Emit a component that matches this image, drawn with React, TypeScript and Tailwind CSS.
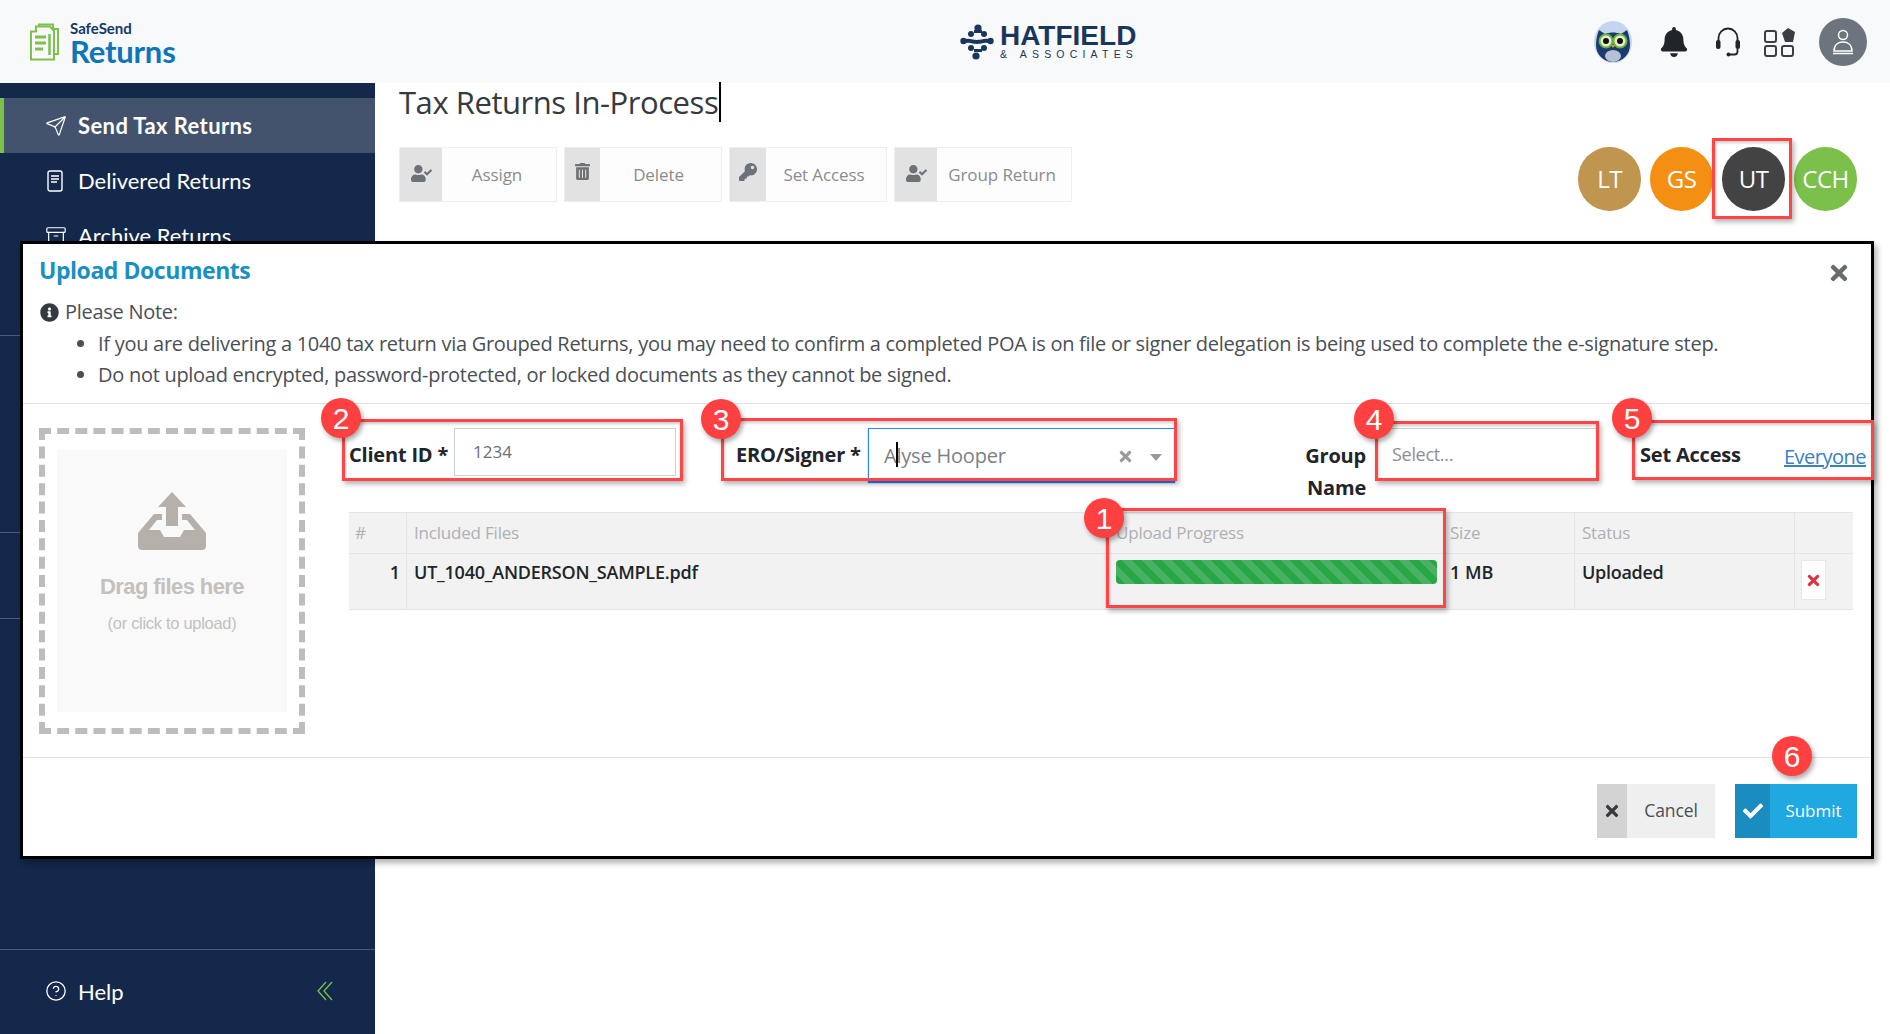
import React from "react";
import { FaBell, FaCheck, FaInfoCircle, FaKey, FaTimes, FaTrashAlt, FaUserCheck } from "react-icons/fa";
import { Send, Archive, CircleHelp } from "lucide-react";

function ToolBtn({ icon, label, w, iw }: { icon: React.ReactNode; label: string; w: string; iw: string }) {
  return (
    <div className={`flex h-[55px] border border-[#eeeeee] bg-[#fdfdfd] ${w}`}>
      <div className={`flex items-start justify-center bg-[#e2e2e2] pt-[15px] text-[#6d7278] ${iw}`}>{icon}</div>
      <div className="flex flex-1 items-center justify-center pr-[4px] text-[17px] tracking-[-0.1px] text-[#8c8c8c]">{label}</div>
    </div>
  );
}

function Circle({ label, color }: { label: string; color: string }) {
  return <div className={`flex h-[64px] w-[63px] items-center justify-center rounded-full text-[24px] tracking-[-0.5px] text-white ${color}`}>{label}</div>;
}

function Badge({ n, className }: { n: number; className: string }) {
  return (
    <div className={`absolute flex h-[40px] w-[40px] items-center justify-center rounded-full bg-[#ff4040] font-['Liberation_Sans',sans-serif] text-[30px] text-white shadow-[2px_3px_5px_rgba(0,0,0,0.35)] ${className}`}>
      {n}
    </div>
  );
}

function RedBox({ className }: { className: string }) {
  return <div className={`pointer-events-none absolute border-[3px] border-[#ff4545] shadow-[2px_3px_5px_rgba(0,0,0,0.3),inset_1px_2px_3px_rgba(0,0,0,0.2)] ${className}`} />;
}

function SafeSendMark() {
  return (
    <svg width="30" height="38" viewBox="0 0 30 38" fill="none" stroke="#7dc14b" strokeWidth="2">
      <path d="M9 3V1.5H23V6H28V31H24" />
      <path d="M1 8.5H6V3.5H20L24 8V36.5H1z" />
      <path d="M5 14H16M5 20H16M5 26H13" strokeWidth="3" />
      <path d="M19.5 11V32" strokeWidth="2.5" />
    </svg>
  );
}

function HatfieldMark() {
  return (
    <svg width="34" height="36" viewBox="0 0 34 36" fill="#1b365d">
      <circle cx="18" cy="4" r="3.6" />
      <circle cx="11" cy="10" r="3" />
      <circle cx="24" cy="10" r="3" />
      <circle cx="3.5" cy="17" r="3.2" />
      <circle cx="30.5" cy="17" r="3.2" />
      <circle cx="11" cy="24" r="3" />
      <circle cx="24" cy="24" r="3" />
      <circle cx="16" cy="32" r="3.6" />
      <path d="M6 15c4-1 7 1 11 1s7-2 11-1v4c-4-1-7 1-11 1s-7-2-11-1z" />
      <path d="M14 6h8v3h-8zM14 25h8v3h-8z" />
    </svg>
  );
}

function Owl() {
  return (
    <svg width="38" height="42" viewBox="0 0 38 42">
      <ellipse cx="19" cy="21" rx="19" ry="21" fill="#c6d5ef" />
      <path d="M5 9l6 4c5-2 11-2 16 0l6-4c2 5 3 10 3 15 0 10-8 17-17 17S2 34 2 24c0-5 1-10 3-15z" fill="#1a3a70" />
      <ellipse cx="19" cy="35" rx="8" ry="6" fill="#b6c1d5" />
      <circle cx="12" cy="20" r="6.5" fill="#e9edd0" stroke="#6bb13c" strokeWidth="2" />
      <circle cx="26" cy="20" r="6.5" fill="#e9edd0" stroke="#6bb13c" strokeWidth="2" />
      <circle cx="12" cy="20" r="3" fill="#111" />
      <circle cx="26" cy="20" r="3" fill="#111" />
      <path d="M17 24h4l-2 3z" fill="#e0a030" />
    </svg>
  );
}

function UploadIcon() {
  return (
    <svg width="68" height="58" viewBox="0 0 68 58" fill="#b5b0aa">
      <path d="M34 0L48 15H40V34H28V15H20z" />
      <path d="M16 22H24V28H19L11 38H22L26 45H42L46 38H57L49 28H44V22H52L68 41V54Q68 58 64 58H4Q0 58 0 54V41z" />
    </svg>
  );
}

function AppsIcon() {
  return (
    <svg width="32" height="30" viewBox="0 0 32 30" fill="none" stroke="#3a3f45" strokeWidth="2">
      <rect x="1" y="4" width="11" height="11" rx="2" />
      <rect x="1" y="19" width="11" height="10" rx="2" />
      <rect x="18" y="19" width="11" height="10" rx="2" />
      <path d="M24 1l7 4-2 10-8 0-3-9z" fill="#3a3f45" stroke="none" />
    </svg>
  );
}

function HeadsetIcon() {
  return (
    <svg width="26" height="30" viewBox="0 0 26 30" fill="none" stroke="#212529" strokeWidth="1.8">
      <path d="M3.5 14V11a9.5 9.5 0 0 1 19 0v3" />
      <rect x="1" y="13" width="4.5" height="9" rx="2" fill="#212529" stroke="none" />
      <rect x="20.5" y="13" width="4.5" height="9" rx="2" fill="#212529" stroke="none" />
      <path d="M22.5 22v2.5a3 3 0 0 1-3 3H15" />
      <circle cx="13.5" cy="27.5" r="2" fill="#212529" stroke="none" />
    </svg>
  );
}

function AvatarIcon() {
  return (
    <svg width="22" height="26" viewBox="0 0 22 26" fill="none" stroke="white" strokeWidth="1.5">
      <circle cx="11" cy="6" r="4.5" />
      <path d="M2 22c0-6 4-9 9-9s9 3 9 9z" />
      <path d="M1 24.5h20" />
    </svg>
  );
}

function SelectBox({ className, children }: { className: string; children: React.ReactNode }) {
  return <div className={`relative flex items-center ${className}`}>{children}</div>;
}

export default function App() {
  return (
    <div className="relative flex h-[1034px] w-[1890px] flex-col overflow-hidden bg-white font-['Open_Sans',sans-serif] text-[#4a4f55]">
      <header className="flex h-[83px] items-center bg-[#f8f9fa]">
        <div className="flex w-[375px] items-center gap-[10px] pl-[30px]">
          <SafeSendMark />
          <div className="flex flex-col font-['Lato',sans-serif]">
            <span className="text-[15px] font-bold leading-[18px] text-[#163a66]">SafeSend</span>
            <span className="text-[31px] font-bold leading-[28px] tracking-[-0.2px] text-[#0d75b8]">Returns</span>
          </div>
        </div>
        <div className="w-[585px]" />
        <div className="flex items-center gap-[6px]">
          <HatfieldMark />
          <div className="flex flex-col font-['Liberation_Sans',sans-serif] text-[#1b365d]">
            <span className="text-[28px] font-bold leading-[25px]">HATFIELD</span>
            <span className="text-[10.5px] leading-[12px] tracking-[5.2px]">&amp; ASSOCIATES</span>
          </div>
        </div>
        <div className="ml-auto flex items-center pr-[23px]">
          <Owl />
          <FaBell className="ml-[27px] text-[30px] text-[#212529]" />
          <span className="ml-[26px]"><HeadsetIcon /></span>
          <span className="ml-[23px]"><AppsIcon /></span>
          <div className="ml-[23px] flex h-[48px] w-[48px] items-center justify-center rounded-full bg-[#6c757d]">
            <AvatarIcon />
          </div>
        </div>
      </header>

      <div className="flex flex-1">
        <aside className="flex w-[375px] flex-col bg-[#14284b] pt-[15px] font-['Lato',sans-serif] text-[22px] text-white">
          <div className="flex h-[55px] items-center gap-[11px] border-l-[4px] border-[#7dc14b] bg-[#43536d] pl-[41px] font-bold tracking-[0.4px]">
            <Send className="h-[22px] w-[22px]" strokeWidth={1.3} />
            <span>Send Tax Returns</span>
          </div>
          <div className="flex h-[55px] items-center gap-[15px] pl-[47px]">
            <svg width="16" height="22" viewBox="0 0 16 22" fill="none" stroke="white" strokeWidth="1.4">
              <rect x="1" y="1" width="14" height="20" rx="2" />
              <path d="M4 6h8M4 9h8M4 12h6" />
            </svg>
            <span>Delivered Returns</span>
          </div>
          <div className="flex h-[55px] items-center gap-[11px] pl-[45px]">
            <Archive className="h-[22px] w-[22px]" strokeWidth={1.3} />
            <span>Archive Returns</span>
          </div>
          <div className="mt-[72px] h-px bg-[#4a5a78]" />
          <div className="mt-[196px] h-px bg-[#4a5a78]" />
          <div className="mt-[85px] h-px bg-[#4a5a78]" />
          <div className="mt-auto flex h-[85px] items-center border-t border-[#4a5a78] pb-[2px] pl-[45px] pr-[42px] font-normal">
            <CircleHelp className="h-[22px] w-[22px]" strokeWidth={1.4} />
            <span className="ml-[11px]">Help</span>
            <svg className="ml-auto" width="16" height="20" viewBox="0 0 16 20" fill="none" stroke="#7dc14b" strokeWidth="1.3">
              <path d="M9 1L1 10L9 19M15 1L7 10L15 19" />
            </svg>
          </div>
        </aside>

        <main className="flex flex-1 flex-col pl-[24px] pr-[33px]">
          <div className="flex h-[38px] items-center">
            <h1 className="border-r-2 border-black pr-px text-[31px] leading-[40px] tracking-[-0.45px] text-[#343a40]">Tax Returns In-Process</h1>
          </div>
          <div className="mt-[26px] flex items-start justify-between">
            <div className="flex gap-[7px]">
              <ToolBtn icon={<FaUserCheck className="text-[21px]" />} label="Assign" w="w-[158px]" iw="w-[42px]" />
              <ToolBtn icon={<FaTrashAlt className="text-[17px]" />} label="Delete" w="w-[158px]" iw="w-[35px]" />
              <ToolBtn icon={<FaKey className="text-[18px]" />} label="Set Access" w="w-[158px]" iw="w-[36px]" />
              <ToolBtn icon={<FaUserCheck className="text-[21px]" />} label="Group Return" w="w-[178px]" iw="w-[42px]" />
            </div>
            <div className="flex gap-[9px]">
              <Circle label="LT" color="bg-[#bf954f]" />
              <Circle label="GS" color="bg-[#f39014]" />
              <Circle label="UT" color="bg-[#434343]" />
              <Circle label="CCH" color="bg-[#7bc04a]" />
            </div>
          </div>
        </main>
      </div>

      <section className="absolute left-[20px] top-[241px] flex h-[618px] w-[1854px] flex-col border-[3px] border-black bg-white shadow-[3px_4px_6px_rgba(0,0,0,0.3)]">
        <div className="h-[160px] border-b border-[#e2e2e6] pl-[16px] pr-[20px]">
          <div className="flex items-center justify-between pt-[6px]">
            <h2 className="text-[23px] font-bold leading-[40px] tracking-[-0.45px] text-[#1a8fc2]">Upload Documents</h2>
            <FaTimes className="mt-[5px] text-[24px] text-[#666b70]" />
          </div>
          <div className="ml-[1px] mt-[6px] flex items-center gap-[6px] text-[20px] leading-[32px] tracking-[-0.28px]">
            <FaInfoCircle className="text-[19px] text-[#343a40]" />
            <span>Please Note:</span>
          </div>
          <ul className="list-disc pl-[59px] text-[20px] leading-[31px] tracking-[-0.28px]">
            <li>If you are delivering a 1040 tax return via Grouped Returns, you may need to confirm a completed POA is on file or signer delegation is being used to complete the e-signature step.</li>
            <li>Do not upload encrypted, password-protected, or locked documents as they cannot be signed.</li>
          </ul>
        </div>

        <div className="flex h-[354px] border-b border-[#e2e2e6] pl-[16px] pt-[24px]">
          <div className="flex h-[306px] w-[266px] shrink-0 border-[6px] border-dashed border-[#bdbdbd] px-[12px] py-[16px]">
            <div className="flex flex-1 flex-col items-center bg-[#f9f9f9] pt-[42px] font-['Liberation_Sans',sans-serif]">
              <UploadIcon />
              <div className="mt-[20px] text-[22px] font-bold tracking-[-0.6px] text-[#c4c0bc]">Drag files here</div>
              <div className="mt-[8px] text-[16.5px] tracking-[-0.3px] text-[#c4c0bc]">(or click to upload)</div>
            </div>
          </div>

          <div className="ml-[44px] flex w-[1504px] shrink-0 flex-col">
            <div className="flex h-[84px] items-start">
              <div className="flex w-[387px] shrink-0 items-start">
                <label className="w-[105px] pt-[13px] text-[20px] font-bold leading-[28px] tracking-[-0.2px] text-[#212529]">Client ID *</label>
                <div className="flex h-[48px] w-[222px] items-center border border-[#cdd0d6] pl-[18px] text-[17px] text-[#6a6f75]">1234</div>
              </div>
              <div className="flex shrink-0 items-start">
                <label className="w-[132px] pt-[13px] text-[20px] font-bold leading-[28px] tracking-[-0.2px] text-[#212529]">ERO/Signer *</label>
                <SelectBox className="h-[54px] w-[307px] border border-[#2684ff] pl-[15px] pt-[2px] text-[20px] tracking-[-0.2px] text-[#7a7f85] shadow-[0_1px_1px_#2684ff]">
                  <span>Alyse Hooper</span>
                  <div className="absolute left-[27px] top-[13px] h-[25px] w-[2px] bg-black" />
                  <FaTimes className="absolute right-[40px] text-[17px] text-[#9a9a9a]" />
                  <div className="absolute right-[12px] top-[25px] h-0 w-0 border-x-[6px] border-t-[7px] border-x-transparent border-t-[#9a9a9a]" />
                </SelectBox>
              </div>
              <label className="ml-[111px] w-[80px] shrink-0 pt-[12px] text-right text-[20px] font-bold leading-[32px] tracking-[-0.2px] text-[#212529]">Group Name</label>
              <div className="ml-[9px] flex h-[52px] w-[222px] shrink-0 items-center border border-[#cdd0d6] pl-[16px] text-[18px] tracking-[-0.3px] text-[#8a8f95]">Select...</div>
              <label className="ml-[43px] w-[144px] shrink-0 pt-[13px] text-[20px] font-bold leading-[28px] tracking-[-0.2px] text-[#212529]">Set Access</label>
              <a className="shrink-0 pt-[14px] text-[20px] leading-[30px] tracking-[-0.5px] text-[#3a80c4] underline">Everyone</a>
            </div>

            <div className="grid h-[98px] grid-cols-[58px_699px_341px_128px_220px_58px] grid-rows-[40px_57px] border-y border-[#e4e4e8] bg-[#f2f2f2] text-[18px]">
              <div className="flex items-center border-r border-[#e4e4e8] pb-[1px] pl-[6px] text-[17px] text-[#aeb0b3]">#</div>
              <div className="flex items-center border-r border-[#e4e4e8] pb-[1px] pl-[7px] text-[17px] tracking-[-0.2px] text-[#aeb0b3]">Included Files</div>
              <div className="flex items-center pb-[1px] pl-[10px] text-[17px] tracking-[-0.2px] text-[#aeb0b3]">Upload Progress</div>
              <div className="flex items-center border-r border-[#e4e4e8] pb-[1px] pl-[3px] text-[17px] tracking-[-0.2px] text-[#aeb0b3]">Size</div>
              <div className="flex items-center border-r border-[#e4e4e8] pb-[1px] pl-[7px] text-[17px] tracking-[-0.2px] text-[#aeb0b3]">Status</div>
              <div />
              <div className="border-r border-t border-[#e4e4e8] pr-[6px] pt-[5px] text-right font-semibold leading-[27px] text-[#212529]">1</div>
              <div className="border-r border-t border-[#e4e4e8] pl-[7px] pt-[5px] font-semibold leading-[27px] tracking-[-0.22px] text-[#212529]">UT_1040_ANDERSON_SAMPLE.pdf</div>
              <div className="border-t border-[#e4e4e8] pl-[10px] pr-[10px] pt-[6px]">
                <div className="h-[24px] rounded-[4px] bg-[repeating-linear-gradient(45deg,#28a745_0,#28a745_7px,#48b164_7px,#48b164_14px)]" />
              </div>
              <div className="border-r border-t border-[#e4e4e8] pl-[3px] pt-[5px] font-semibold leading-[27px] text-[#212529]">1 MB</div>
              <div className="border-r border-t border-[#e4e4e8] pl-[7px] pt-[5px] font-semibold leading-[27px] tracking-[-0.3px] text-[#212529]">Uploaded</div>
              <div className="border-t border-[#e4e4e8] pl-[6px] pt-[6px]">
                <div className="flex h-[40px] w-[25px] items-center justify-center border border-[#e8e8e8] bg-white">
                  <FaTimes className="text-[17px] text-[#dc3545]" />
                </div>
              </div>
            </div>
          </div>
        </div>

        <div className="flex flex-1 items-start justify-end gap-[20px] pr-[14px] pt-[26px]">
          <div className="flex h-[54px] w-[118px]">
            <div className="flex w-[30px] items-center justify-center bg-[#d3d3d3]"><FaTimes className="text-[18px] text-[#343a40]" /></div>
            <div className="flex flex-1 items-center justify-center bg-[#efefef] pb-[2px] text-[17.5px] tracking-[-0.1px] text-[#4a4f55]">Cancel</div>
          </div>
          <div className="flex h-[54px] w-[122px] text-white">
            <div className="flex w-[35px] items-center justify-center bg-[#1a8cbf]"><FaCheck className="text-[20px]" /></div>
            <div className="flex flex-1 items-center justify-center bg-[#20a8e0] text-[17px]">Submit</div>
          </div>
        </div>
      </section>

      <RedBox className="left-[1712px] top-[138px] h-[81px] w-[80px]" />
      <RedBox className="left-[342px] top-[419px] h-[62px] w-[341px]" />
      <RedBox className="left-[721px] top-[418px] h-[63px] w-[456px]" />
      <RedBox className="left-[1375px] top-[421px] h-[60px] w-[224px]" />
      <RedBox className="left-[1632px] top-[420px] h-[60px] w-[242px]" />
      <RedBox className="left-[1106px] top-[508px] h-[100px] w-[340px]" />

      <Badge n={2} className="left-[321px] top-[398px]" />
      <Badge n={3} className="left-[701px] top-[399px]" />
      <Badge n={4} className="left-[1354px] top-[399px]" />
      <Badge n={5} className="left-[1612px] top-[398px]" />
      <Badge n={1} className="left-[1084px] top-[498px]" />
      <Badge n={6} className="left-[1772px] top-[736px]" />
    </div>
  );
}
